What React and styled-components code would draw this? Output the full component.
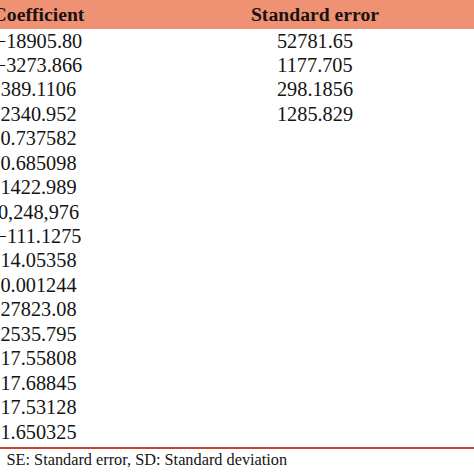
import React from "react";
import styled, { createGlobalStyle } from "styled-components";

const Global = createGlobalStyle`
  html, body { margin: 0; padding: 0; background: #ffffff; }
  body { overflow: hidden; width: 474px; height: 474px; }
`;

const Page = styled.div`
  width: 474px;
  height: 474px;
  overflow: hidden;
  font-family: "Liberation Serif", "Times New Roman", serif;
  color: #141414;
`;

const Table = styled.div`
  display: grid;
  grid-template-columns: 120px 433px;
  margin-left: -21.5px;
  width: 553px;
`;

const HeadCell = styled.div`
  background: #ef9173;
  height: 28.5px;
  line-height: 28.5px;
  font-size: 19.7px;
  font-weight: 700;
  text-align: center;
  white-space: nowrap;
  color: #1a1210;
`;

const Cell = styled.div`
  font-size: 20.3px;
  line-height: 24.44px;
  height: 24.44px;
  text-align: center;
  white-space: nowrap;
`;

const Rule = styled.div`
  height: 2px;
  margin-top: 2.6px;
  background: #c4442c;
`;

const Note = styled.div`
  font-size: 16.3px;
  line-height: 20px;
  margin-top: 1px;
  padding-left: 6.5px;
  white-space: nowrap;
`;

const coef = [
  "\u221218905.80",
  "\u22123273.866",
  "389.1106",
  "2340.952",
  "0.737582",
  "0.685098",
  "1422.989",
  "0,248,976",
  "\u2212111.1275",
  "14.05358",
  "0.001244",
  "27823.08",
  "2535.795",
  "17.55808",
  "17.68845",
  "17.53128",
  "1.650325",
];

const se = ["52781.65", "1177.705", "298.1856", "1285.829"];

export default function App() {
  return (
    <Page>
      <Global />
      <Table>
        <HeadCell>Coefficient</HeadCell>
        <HeadCell>Standard error</HeadCell>
        {coef.map((c, i) => (
          <React.Fragment key={i}>
            <Cell>{c}</Cell>
            <Cell>{se[i] || ""}</Cell>
          </React.Fragment>
        ))}
      </Table>
      <Rule />
      <Note>SE: Standard error, SD: Standard deviation</Note>
    </Page>
  );
}
